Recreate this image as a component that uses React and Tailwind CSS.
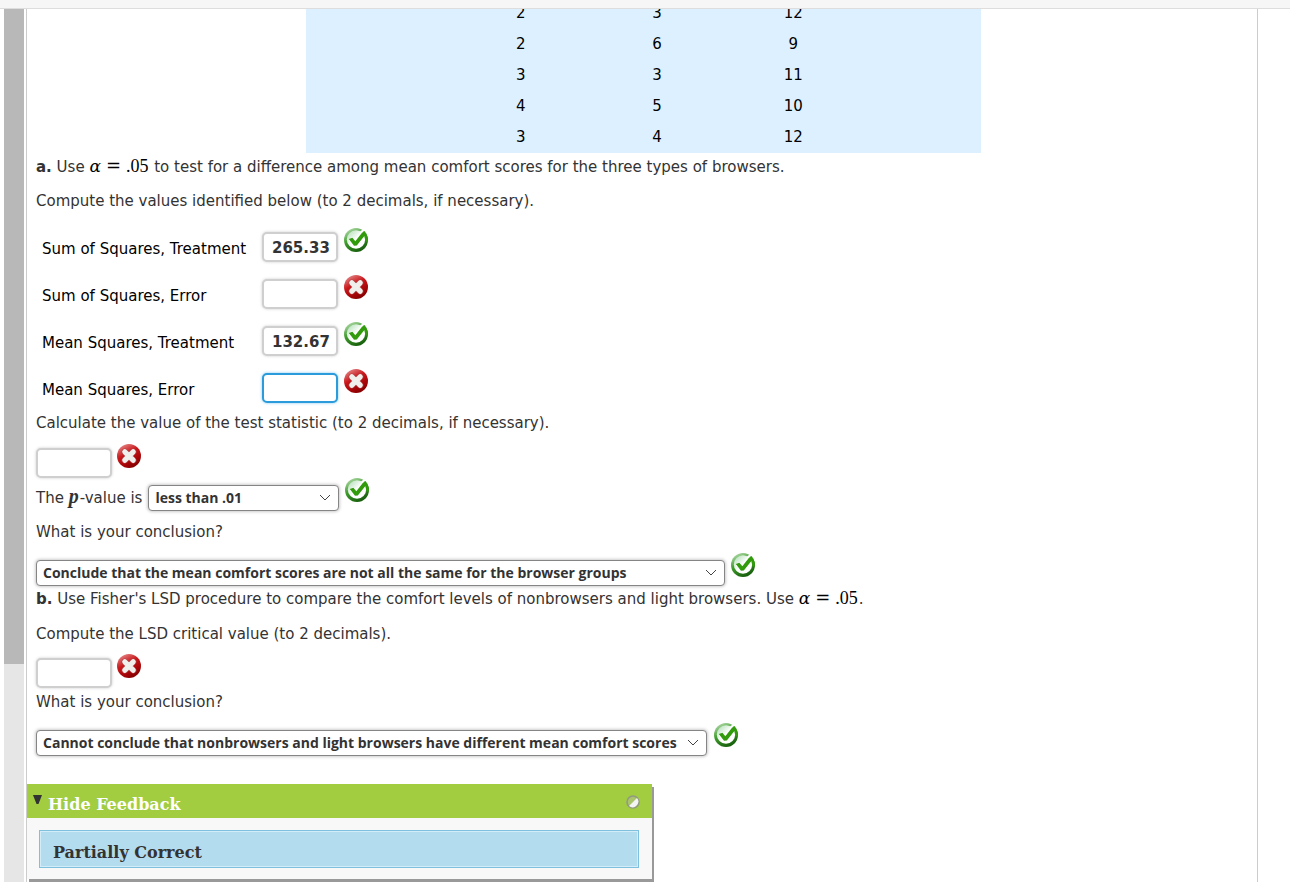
import React from 'react';

const rows = [
  [2, 3, 12],
  [2, 6, 9],
  [3, 3, 11],
  [4, 5, 10],
  [3, 4, 12],
];

const answers = [
  { id: 'sstr', label: 'Sum of Squares, Treatment', value: '265.33', correct: true },
  { id: 'sse', label: 'Sum of Squares, Error', value: '', correct: false },
  { id: 'mstr', label: 'Mean Squares, Treatment', value: '132.67', correct: true },
  { id: 'mse', label: 'Mean Squares, Error', value: '', correct: false, active: true },
];

const CorrectIcon = () => (
  <svg className="w-6 h-6 shrink-0" viewBox="0 0 24 24" role="img" aria-label="Correct">
    <defs>
      <linearGradient id="ring-green" x1="0.2" y1="0" x2="0.7" y2="1">
        <stop offset="0" stopColor="#b4dcae" />
        <stop offset="0.45" stopColor="#3f9c2c" />
        <stop offset="1" stopColor="#14590a" />
      </linearGradient>
      <linearGradient id="face-green" x1="0" y1="0" x2="1" y2="1">
        <stop offset="0" stopColor="#a9dbae" />
        <stop offset="0.5" stopColor="#ffffff" />
        <stop offset="1" stopColor="#ffffff" />
      </linearGradient>
    </defs>
    <circle cx="12" cy="12" r="12" fill="url(#ring-green)" />
    <circle cx="12" cy="11.5" r="9.2" fill="url(#face-green)" />
    <path d="M16.5 4.5 L19.8 1.8 L21.6 4.6" fill="none" stroke="#fff" strokeWidth="2" />
    <path d="M6.4 11 L11.2 16 L20 4.6" fill="none" stroke="#fff" strokeWidth="5" />
    <path d="M4.8 11 L8.4 9.8 L11.3 13.2 L18 4.8 L20.8 3 L23.6 9 L23.8 13.6 L21.4 13.6 L20.4 8 L12.8 17.6 L10 17.8 Z" fill="#319b0c" />
  </svg>
);

const WrongIcon = () => (
  <svg className="w-6 h-6 shrink-0" viewBox="0 0 24 24" role="img" aria-label="Incorrect">
    <defs>
      <linearGradient id="face-red" x1="0.2" y1="0" x2="0.75" y2="1">
        <stop offset="0" stopColor="#e58a8a" />
        <stop offset="0.4" stopColor="#c9171b" />
        <stop offset="0.75" stopColor="#a30406" />
        <stop offset="1" stopColor="#7c0000" />
      </linearGradient>
    </defs>
    <circle cx="12" cy="12" r="12" fill="url(#face-red)" />
    <path d="M7.8 7.8 L16.2 16.2 M16.2 7.8 L7.8 16.2" stroke="#b04040" strokeWidth="6.4" strokeLinecap="round" />
    <path d="M7.8 7.8 L16.2 16.2 M16.2 7.8 L7.8 16.2" stroke="#f1efec" strokeWidth="5.2" strokeLinecap="round" />
  </svg>
);

const Mark = ({ correct }) => (correct ? <CorrectIcon /> : <WrongIcon />);

const AnswerInput = ({ id, value = '', active, label }) => (
  <input
    id={id}
    type="text"
    defaultValue={value}
    aria-label={label}
    className={
      active
        ? 'block w-[76px] h-[30px] rounded-[5px] border-2 border-[#2b9bdc] bg-white pl-2 pr-0 pt-[2px] text-[15px] font-bold text-[#333] shadow-[0_0_3px_#7cc6ee] outline-none'
        : 'block w-[76px] h-[30px] rounded-[5px] border-2 border-[#cfcfcf] bg-white pl-2 pr-0 pt-[2px] text-[15px] font-bold text-[#333] shadow-[0_0_3px_#cccccc] outline-none'
    }
  />
);

const AnswerSelect = ({ id, label, value, width }) => (
  <div className={`relative mt-[7px] ${width}`}>
    <select
      id={id}
      aria-label={label}
      className="block w-full h-[26px] appearance-none rounded border border-[#858585] bg-white pl-[6px] pr-6 font-['Open_Sans',sans-serif] text-[14px] font-bold text-[#333] shadow-[0_0_3px_1px_#cccccc]"
    >
      <option>{value}</option>
    </select>
    <svg className="absolute right-2 top-[7px] w-3 h-3 pointer-events-none" viewBox="0 0 12 12" fill="none" stroke="#444">
      <path d="M1 3 L6 8 L11 3" />
    </svg>
  </div>
);

const Alpha = () => (
  <span className="mr-px font-['Liberation_Serif',serif] text-[18px] leading-none text-black">
    <i className="font-['DejaVu_Serif',serif] text-[17px] leading-none">α</i>
    <span className="mx-[5px] font-['DejaVu_Serif',serif] text-[18px] leading-none">=</span>
    .05
  </span>
);

const Feedback = () => (
  <section className="mt-7 w-[625px] max-w-full bg-[#f8f8f8] shadow-[2px_3px_0_#999999]">
    <div className="flex items-center bg-[#a2cd41] h-[34px] pl-[6px] pr-3">
      <button type="button" className="flex items-center gap-[6px]">
        <svg className="w-[9px] h-[9px] mb-1" viewBox="0 0 9 9" fill="#333">
          <path d="M0 0 H9 L5.5 9 H3.5 Z" />
        </svg>
        <span className="pt-2 font-['DejaVu_Serif',serif] text-[16px] leading-6 font-bold text-white">
          Hide Feedback
        </span>
      </button>
      <svg className="ml-auto mt-[2px] w-[14px] h-[14px]" viewBox="0 0 14 14" role="img" aria-label="Partially correct">
        <circle cx="7" cy="7" r="6" fill="#a9c46a" stroke="#929a80" strokeWidth="1.6" />
        <path d="M11 3 A5.7 5.7 0 0 1 3 11 Z" fill="#f4f4f4" />
      </svg>
    </div>
    <div className="pt-3 px-3 pb-[11px]">
      <h3 className="h-[38px] w-[600px] max-w-full border border-[#7fc0de] bg-[#b3dcee] pl-[13px] pt-[10px] font-['DejaVu_Serif',serif] text-[16px] leading-6 font-bold text-[#333] shadow-[inset_0_0_0_1px_#d3edf8]">
        Partially Correct
      </h3>
    </div>
  </section>
);

const App = () => {
  return (
    <div className="h-screen flex flex-col overflow-hidden bg-white font-['DejaVu_Sans',sans-serif] text-[15px] leading-6 text-[#333]">
      <div className="h-[9px] shrink-0 bg-[#f6f6f6] border-b border-[#dddddd]" />

      <div className="flex flex-1 min-h-0">
        <div className="ml-1 mr-[2px] w-5 shrink-0 bg-[#e6e6e6]">
          <div className="h-3/4 bg-[#b8b8b8]" />
        </div>

        <main className="flex-1 min-w-0 mr-8 overflow-hidden border-x border-[#cccccc]">
          <div className="pl-[2px]">
            <div className="mx-auto -mt-3 pb-px w-[675px] max-w-full bg-[#ddf0ff] text-black">
              <table className="ml-[147px] table-fixed w-[409px]">
                <tbody>
                  {rows.map((row, index) => (
                    <tr key={index} className="h-[31px]">
                      {row.map((score, column) => (
                        <td key={column} className="p-0 text-center">{score}</td>
                      ))}
                    </tr>
                  ))}
                </tbody>
              </table>
            </div>
          </div>

          <div className="pl-[9px]">
            <p className="mt-[2px] h-6">
              <b>a.</b> Use <Alpha /> to test for a difference among mean comfort scores for the three types of browsers.
            </p>
            <p className="mt-[10px]">Compute the values identified below (to 2 decimals, if necessary).</p>

            <div className="mt-[10px] pl-[6px] text-black">
              {answers.map((answer) => (
                <div key={answer.id} className="flex items-center h-[47px]">
                  <label htmlFor={answer.id} className="w-[220px] pt-1">{answer.label}</label>
                  <AnswerInput id={answer.id} value={answer.value} active={answer.active} />
                  <div className="ml-[6px] pb-[13px]">
                    <Mark correct={answer.correct} />
                  </div>
                </div>
              ))}
            </div>

            <p>Calculate the value of the test statistic (to 2 decimals, if necessary).</p>
            <div className="mt-[9px] flex items-start gap-[5px]">
              <div className="pt-1">
                <AnswerInput id="statistic" label="Test statistic" />
              </div>
              <WrongIcon />
            </div>

            <div className="flex items-start gap-[6px]">
              <label htmlFor="pvalue" className="pt-2 whitespace-nowrap">
                The <b className="mr-px font-['Liberation_Serif',serif] text-[20px] leading-none italic">p</b>-value is
              </label>
              <AnswerSelect id="pvalue" value="less than .01" width="w-[191px]" />
              <CorrectIcon />
            </div>

            <p className="mt-[9px]">What is your conclusion?</p>
            <div className="mt-[9px] flex items-start gap-[6px]">
              <AnswerSelect
                id="conclusion-a"
                label="Conclusion for part a"
                value="Conclude that the mean comfort scores are not all the same for the browser groups"
                width="w-[689px]"
              />
              <CorrectIcon />
            </div>

            <p className="mt-px h-6">
              <b>b.</b> Use Fisher's LSD procedure to compare the comfort levels of nonbrowsers and light browsers. Use <Alpha />.
            </p>
            <p className="mt-[11px]">Compute the LSD critical value (to 2 decimals).</p>
            <div className="mt-2 flex items-start gap-[5px]">
              <div className="pt-1">
                <AnswerInput id="lsd" label="LSD critical value" />
              </div>
              <WrongIcon />
            </div>

            <p className="mt-[2px]">What is your conclusion?</p>
            <div className="mt-[9px] flex items-start gap-[7px]">
              <AnswerSelect
                id="conclusion-b"
                label="Conclusion for part b"
                value="Cannot conclude that nonbrowsers and light browsers have different mean comfort scores"
                width="w-[671px]"
              />
              <CorrectIcon />
            </div>
          </div>

          <Feedback />
        </main>
      </div>
    </div>
  );
};

export default App;
